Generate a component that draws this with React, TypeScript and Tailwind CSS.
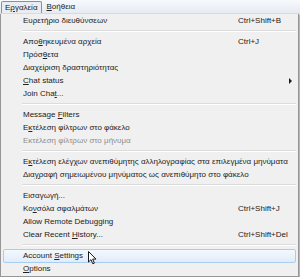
import React from 'react';

type Item =
    | { sep: true }
    | { label: React.ReactNode; shortcut?: string; disabled?: boolean; submenu?: boolean; active?: boolean };

const u = (ch: string) => <span className="underline underline-offset-[1px]">{ch}</span>;

const items: Item[] = [
    { label: 'Ευρετήριο διευθύνσεων', shortcut: 'Ctrl+Shift+B' },
    { sep: true },
    { label: <>Απο{u('θ')}ηκευμένα αρχεία</>, shortcut: 'Ctrl+J' },
    { label: <>Πρόσ{u('θ')}ετα</> },
    { label: <>Δια{u('χ')}είριση δραστηριότητας</> },
    { label: <>{u('C')}hat status</>, submenu: true },
    { label: <>Join Cha{u('t')}...</> },
    { sep: true },
    { label: <>Message {u('F')}ilters</> },
    { label: <>Ε{u('κ')}τέλεση φίλτρων στο φάκελο</> },
    { label: 'Εκτέλεση φίλτρων στο μήνυμα', disabled: true },
    { sep: true },
    { label: <>Ε{u('κ')}τέλεση ελέγχων ανεπιθύμητης αλληλογραφίας στα επιλεγμένα μηνύματα</> },
    { label: <>Δια{u('γ')}ραφή σημειωμένου μηνύματος ως ανεπιθύμητο στο φάκελο</> },
    { sep: true },
    { label: 'Εισαγωγή...' },
    { label: <>Κο{u('ν')}σόλα σφαλμάτων</>, shortcut: 'Ctrl+Shift+J' },
    { label: 'Allow Remote Debugging' },
    { label: <>Clear Recent {u('H')}istory...</>, shortcut: 'Ctrl+Shift+Del' },
    { sep: true },
    { label: <>Account {u('S')}ettings</>, active: true },
    { label: <>{u('O')}ptions</> },
];

const Cursor = () => (
    <svg width="9" height="14" viewBox="0 0 9 14" className="absolute left-[88px] top-[251px]">
        <path d="M0.5 0.5 L0.5 11 L3 8.6 L4.8 12.8 L6.4 12.1 L4.7 8.1 L8 8.1 Z" fill="#ffffff" stroke="#1a1a1a" strokeWidth="1" strokeLinejoin="round" />
    </svg>
);

export default function App() {
    return (
        <div className="relative w-[300px] h-[277px] overflow-hidden bg-[#f0f0f0] text-[8px] leading-none text-[#222] font-['Liberation_Sans',sans-serif]">
            {/* menubar */}
            <div className="flex h-[14px] items-stretch border-b border-[#d5dbe3] bg-gradient-to-b from-[#f7f9fc] to-[#e6ebf2]">
                <div className="ml-[1px] mt-[1px] flex items-center rounded-t-[2px] border border-b-0 border-[#8a9099] bg-[#e9edf2] px-[3px]">
                    Ε{u('ρ')}γαλεία
                </div>
                <div className="ml-[3px] flex items-center px-[2px]">
                    {u('Β')}οήθεια
                </div>
            </div>

            {/* dropdown */}
            <div className="mr-[1px] flex flex-col border border-t-0 border-[#979797] px-[2px] pb-[1px] shadow-[1px_1px_1px_rgba(0,0,0,0.25)]">
                {items.map((it, i) =>
                    'sep' in it ? (
                        <div key={i} className="flex h-[8px] items-center pl-[19px]">
                            <div className="h-[2px] flex-1 border-t border-b border-t-[#dcdcdc] border-b-white" />
                        </div>
                    ) : (
                        <div
                            key={i}
                            className={`flex items-center whitespace-nowrap ${it.active ? '-my-[0.5px] h-[14px] rounded-[2px] border border-[#a9cdf0] bg-gradient-to-b from-[#f3f8fd] to-[#e1ecf9] pl-[19px]' : 'h-[13px] pl-[20px]'} ${it.disabled ? 'text-[#8d8d8d]' : ''}`}
                        >
                            <span className="flex-1">{it.label}</span>
                            {it.shortcut && <span className="w-[58px]">{it.shortcut}</span>}
                            {it.submenu && (
                                <span className="mr-[4px] h-0 w-0 border-y-[3px] border-l-[3px] border-y-transparent border-l-[#1c1c1c]" />
                            )}
                        </div>
                    )
                )}
            </div>
            <Cursor />
        </div>
    );
}
